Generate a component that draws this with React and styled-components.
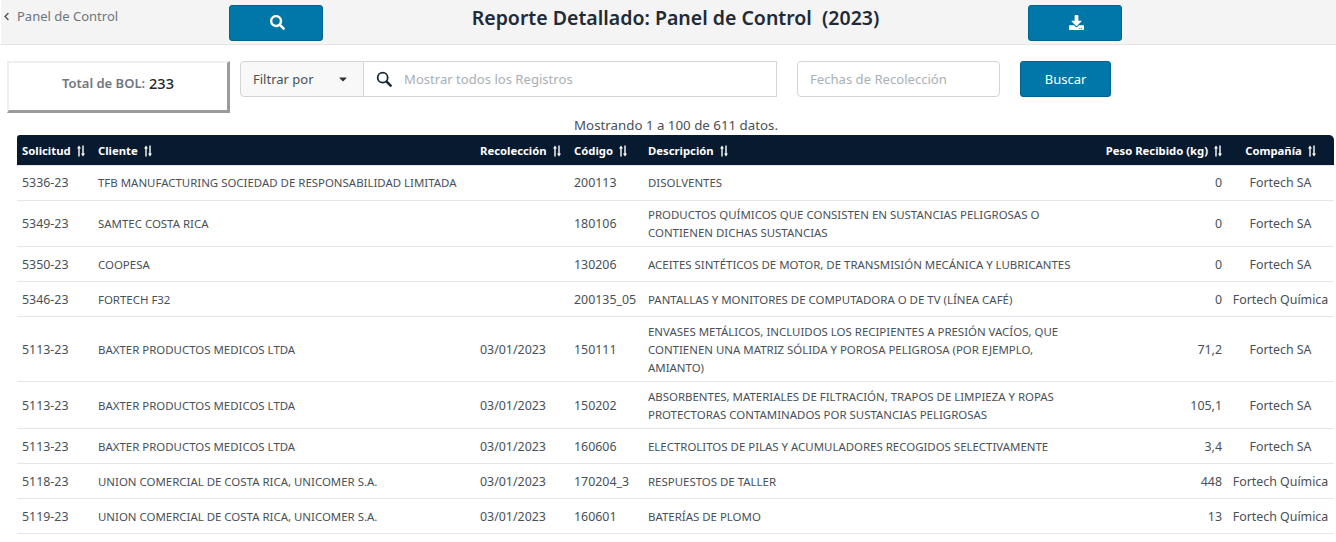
import styled, { createGlobalStyle } from 'styled-components'
import { FaSearch, FaDownload, FaChevronLeft, FaCaretDown } from 'react-icons/fa'

const GlobalStyle = createGlobalStyle`
html, body {
    margin: 0;
    padding: 0;
    background: #fff;
    font-family: "Noto Sans", "Open Sans", sans-serif;
    color: #212529;
}
`

const Page = styled.div`
width: 1336px;
height: 542px;
overflow: hidden;
`

const TopBar = styled.header`
display: grid;
grid-template-columns: 228px 94px 705px 94px 1fr;
box-sizing: border-box;
height: 45px;
background: #f4f4f4;
border-bottom: 1px solid #e6e6e6;
border-left: 1px solid #fff;
`

const BackLink = styled.a`
display: flex;
align-items: center;
gap: 6px;
height: 32px;
padding-left: 1px;
font-size: 13px;
color: #6c757d;
svg { font-size: 9px; color: #555; }
`

const IconButton = styled.button`
display: flex;
align-items: center;
justify-content: center;
box-sizing: border-box;
width: 94px;
height: 36px;
margin-top: 5px;
padding: 0 0 2px 3px;
color: #fff;
font-size: 15px;
background: #0077a8;
border: 1px solid #00648e;
border-radius: 3px;
`

const Title = styled.h1`
margin: 3px 0 0;
font-size: 19.5px;
line-height: 29px;
font-weight: 600;
text-align: center;
white-space: pre;
color: #212b36;
`

const Toolbar = styled.div`
display: flex;
align-items: flex-start;
padding: 16px 0 0 7px;
`

const TotalCard = styled.div`
display: flex;
align-items: center;
justify-content: center;
gap: 4px;
box-sizing: border-box;
width: 223px;
height: 52px;
padding-bottom: 8px;
background: #fff;
border-style: solid;
border-width: 2px 3px 3px 2px;
border-color: #efefef #9b9b9b #9b9b9b #efefef;
font-size: 13px;
font-weight: 600;
color: #70777e;
`

const TotalValue = styled.span`
font-size: 14.5px;
font-weight: 500;
color: #212529;
`

const FilterGroup = styled.div`
display: flex;
box-sizing: border-box;
width: 537px;
height: 36px;
margin-left: 10px;
`

const FilterSelect = styled.div`
display: flex;
align-items: center;
justify-content: space-between;
box-sizing: border-box;
width: 124px;
padding: 0 14px 0 12px;
font-size: 13px;
color: #495057;
background: #f8f8f8;
border: 1px solid #d4d4d4;
border-radius: 4px 0 0 4px;
svg { font-size: 12px; color: #333; }
`

const SearchField = styled.div`
display: flex;
align-items: center;
flex: 1;
gap: 12px;
padding-left: 12px;
border: 1px solid #d4d4d4;
border-left: 0;
`

const SearchGlyph = styled.svg`
width: 16px;
height: 16px;
`

const Placeholder = styled.span`
font-size: 13.1px;
color: #a9afb5;
`

const DateField = styled.div`
display: flex;
align-items: center;
box-sizing: border-box;
width: 203px;
height: 36px;
margin-left: 20px;
padding-left: 12px;
border: 1px solid #d4d4d4;
border-radius: 4px;
`

const SearchButton = styled.button`
width: 91px;
height: 36px;
margin-left: 20px;
padding: 0;
font-family: inherit;
font-size: 13px;
color: #fff;
background: #0077a8;
border: 1px solid #00648e;
border-radius: 3px;
`

const ResultCount = styled.div`
height: 18px;
margin: 3px 0 1px;
padding-left: 16px;
font-size: 13.3px;
line-height: 18px;
text-align: center;
color: #495057;
`

const Table = styled.table`
width: 1317px;
margin-left: 17px;
border-collapse: separate;
border-spacing: 0;
table-layout: fixed;
font-size: 11.45px;
line-height: 18px;
color: #495057;
tbody tr:first-child td {
    height: 36px;
    padding-top: 5px;
    padding-bottom: 5px;
    border-top: 1px solid #e4e6e8;
}
tbody tr:nth-child(2) td {
    padding-top: 5px;
}
`

const HeaderCell = styled.th`
height: 30px;
padding: 2px ${p => p.$right || 0}px 0 ${p => (p.$align ? 0 : 5)}px;
box-sizing: border-box;
background: #081a30;
color: #fff;
font-size: 11.3px;
font-weight: 700;
text-align: ${p => p.$align || 'left'};
white-space: nowrap;
&:first-child { border-top-left-radius: 3px; }
&:last-child { border-top-right-radius: 5px; }
`

const Cell = styled.td`
height: 35px;
padding: 6px ${p => p.$right || 5}px 4px 5px;
box-sizing: border-box;
border-bottom: 1px solid #e4e6e8;
font-size: ${p => (p.$wide ? '12.4px' : 'inherit')};
text-align: ${p => p.$align || 'left'};
vertical-align: middle;
`

const SortGlyph = styled.svg`
width: 8px;
height: 12px;
margin-left: 6px;
vertical-align: -2px;
`

function SortIcon() {
    return (
        <SortGlyph viewBox="0 0 8 12" fill="#fff">
            <path d="M2 .4 4 3.6H2.7V11.6H1.3V3.6H0Z" />
            <path d="M6 11.6 4 8.4H5.3V.4H6.7V8.4H8Z" />
        </SortGlyph>
    )
}

const columns = [
    { label: 'Solicitud', width: 76, wide: true },
    { label: 'Cliente', width: 382 },
    { label: 'Recolección', width: 94, wide: true },
    { label: 'Código', width: 74, wide: true },
    { label: 'Descripción', width: 450 },
    { label: 'Peso Recibido (kg)', width: 134, align: 'right', right: 5, wide: true },
    { label: 'Compañía', width: 107, align: 'center', wide: true },
]

const rows = [
    ['5336-23', 'TFB MANUFACTURING SOCIEDAD DE RESPONSABILIDAD LIMITADA', '', '200113', 'DISOLVENTES', '0', 'Fortech SA'],
    ['5349-23', 'SAMTEC COSTA RICA', '', '180106', 'PRODUCTOS QUÍMICOS QUE CONSISTEN EN SUSTANCIAS PELIGROSAS O CONTIENEN DICHAS SUSTANCIAS', '0', 'Fortech SA'],
    ['5350-23', 'COOPESA', '', '130206', 'ACEITES SINTÉTICOS DE MOTOR, DE TRANSMISIÓN MECÁNICA Y LUBRICANTES', '0', 'Fortech SA'],
    ['5346-23', 'FORTECH F32', '', '200135_05', 'PANTALLAS Y MONITORES DE COMPUTADORA O DE TV (LÍNEA CAFÉ)', '0', 'Fortech Química'],
    ['5113-23', 'BAXTER PRODUCTOS MEDICOS LTDA', '03/01/2023', '150111', 'ENVASES METÁLICOS, INCLUIDOS LOS RECIPIENTES A PRESIÓN VACÍOS, QUE CONTIENEN UNA MATRIZ SÓLIDA Y POROSA PELIGROSA (POR EJEMPLO, AMIANTO)', '71,2', 'Fortech SA'],
    ['5113-23', 'BAXTER PRODUCTOS MEDICOS LTDA', '03/01/2023', '150202', 'ABSORBENTES, MATERIALES DE FILTRACIÓN, TRAPOS DE LIMPIEZA Y ROPAS PROTECTORAS CONTAMINADOS POR SUSTANCIAS PELIGROSAS', '105,1', 'Fortech SA'],
    ['5113-23', 'BAXTER PRODUCTOS MEDICOS LTDA', '03/01/2023', '160606', 'ELECTROLITOS DE PILAS Y ACUMULADORES RECOGIDOS SELECTIVAMENTE', '3,4', 'Fortech SA'],
    ['5118-23', 'UNION COMERCIAL DE COSTA RICA, UNICOMER S.A.', '03/01/2023', '170204_3', 'RESPUESTOS DE TALLER', '448', 'Fortech Química'],
    ['5119-23', 'UNION COMERCIAL DE COSTA RICA, UNICOMER S.A.', '03/01/2023', '160601', 'BATERÍAS DE PLOMO', '13', 'Fortech Química'],
]

function App() {
    return (
        <Page>
            <GlobalStyle />
            <TopBar>
                <BackLink><FaChevronLeft />Panel de Control</BackLink>
                <IconButton><FaSearch /></IconButton>
                <Title>{'Reporte Detallado: Panel de Control  (2023)'}</Title>
                <IconButton><FaDownload /></IconButton>
            </TopBar>
            <Toolbar>
                <TotalCard>Total de BOL: <TotalValue>233</TotalValue></TotalCard>
                <FilterGroup>
                    <FilterSelect>Filtrar por <FaCaretDown /></FilterSelect>
                    <SearchField>
                        <SearchGlyph viewBox="0 0 16 16" fill="none" stroke="#16283a">
                            <circle cx="6.7" cy="6.7" r="5" strokeWidth="1.8" />
                            <path d="M10.6 10.6l4 4" strokeWidth="2.6" strokeLinecap="round" />
                        </SearchGlyph>
                        <Placeholder>Mostrar todos los Registros</Placeholder>
                    </SearchField>
                </FilterGroup>
                <DateField><Placeholder>Fechas de Recolección</Placeholder></DateField>
                <SearchButton>Buscar</SearchButton>
            </Toolbar>
            <ResultCount>Mostrando 1 a 100 de 611 datos.</ResultCount>
            <Table>
                <colgroup>
                    {columns.map(col => <col key={col.label} width={col.width} />)}
                </colgroup>
                <thead>
                    <tr>
                        {columns.map(col => (
                            <HeaderCell key={col.label} $align={col.align} $right={col.right}>
                                {col.label}<SortIcon />
                            </HeaderCell>
                        ))}
                    </tr>
                </thead>
                <tbody>
                    {rows.map((row, i) => (
                        <tr key={i}>
                            {row.map((value, j) => (
                                <Cell key={j} $align={columns[j].align} $right={columns[j].right} $wide={columns[j].wide}>{value}</Cell>
                            ))}
                        </tr>
                    ))}
                </tbody>
            </Table>
        </Page>
    )
}

export default App
